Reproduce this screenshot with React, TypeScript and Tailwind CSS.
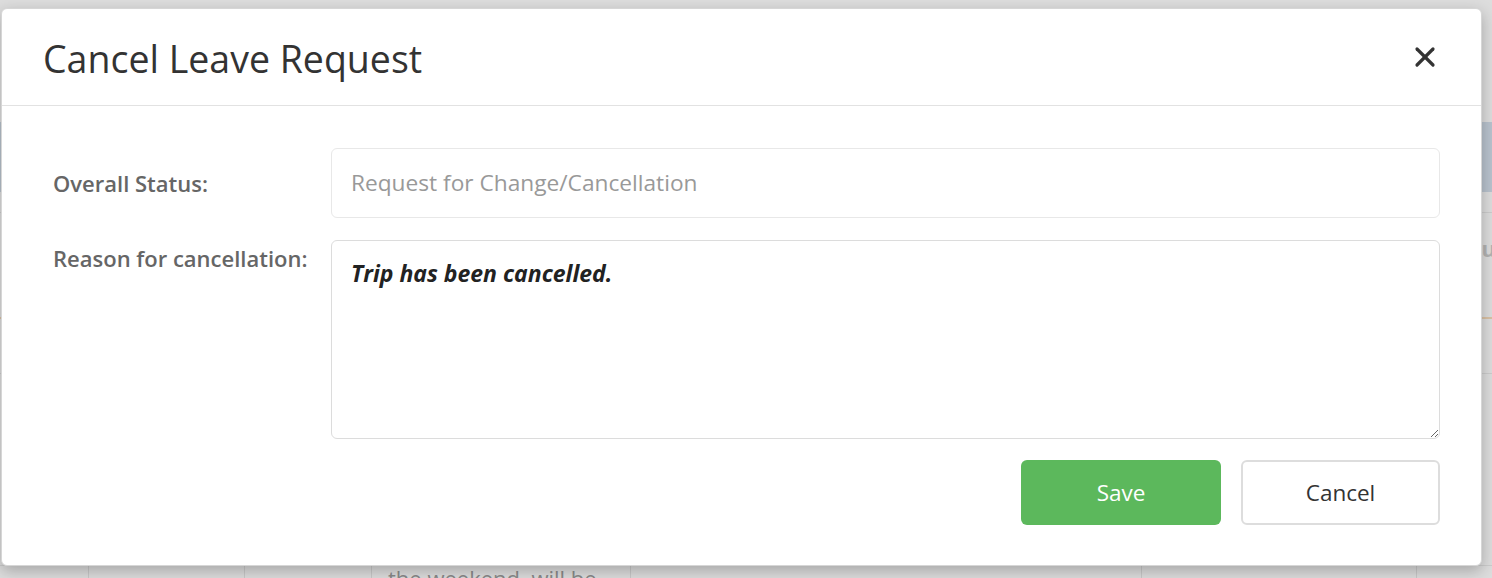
import { X } from 'lucide-react';

const font = 'font-["Open_Sans","Noto_Sans",sans-serif]';

function BackgroundPage() {
  return (
    <div className="absolute inset-0 bg-[#f7f7f7]">
      <div className="mt-[122px] h-[70px] bg-[#cfdae6]" />
      <div className="h-[21px] border-b border-[#e4e4e4]" />
      <div className="h-[106px] border-b-2 border-[#f3d9b8] pl-[1437px] pt-[20px] text-[22px] font-bold leading-[30px] text-[#c8c8c8]">
        Status
      </div>
      <div className="h-[55px] border-b border-[#e4e4e4]" />
      <div className="h-[192px] border-b border-[#e4e4e4]" />
      <div className="flex h-[30px] text-[22px] leading-[24px] text-[#9a9a9a]">
        <div className="w-[89px] border-r border-[#e0e0e0]" />
        <div className="w-[156px] border-r border-[#e0e0e0]" />
        <div className="w-[127px] border-r border-[#e0e0e0]" />
        <div className="w-[259px] border-r border-[#e0e0e0] pl-[16px]">the weekend, will be</div>
        <div className="w-[511px] border-r border-[#e0e0e0] pl-[16px] pt-[10px]">Monday to Thursday, instead of 5 ½ days</div>
        <div className="w-[275px] border-r border-[#e0e0e0]" />
      </div>
    </div>
  );
}

export default function App() {
  return (
    <div className={`relative h-[578px] w-[1492px] overflow-hidden ${font}`}>
      <BackgroundPage />
      <div className="absolute inset-0 bg-black/10" />
      <div className="absolute left-[1px] top-[8px] flex h-[558px] w-[1481px] flex-col rounded-[6px] border border-[#d6d6d6] bg-white shadow-[0_5px_15px_rgba(0,0,0,0.25)]">
        <div className="flex h-[97px] items-center justify-between border-b border-[#e2e2e2] pl-[41px] pr-[40px]">
          <h4 className="pt-[4px] text-[37.5px] font-normal leading-none text-[#333]">Cancel Leave Request</h4>
          <button className="flex h-[32px] w-[32px] items-center justify-center text-[#333]">
            <X size={34} strokeWidth={2.4} />
          </button>
        </div>
        <div className="flex flex-1 flex-col pl-[51px] pr-[41px] pt-[42px]">
          <div className="flex items-center">
            <label className="w-[278px] text-[22px] font-semibold text-[#666]">Overall Status:</label>
            <div className="flex h-[70px] flex-1 items-center rounded-[6px] border border-[#e8e8e8] px-[19px] text-[22.7px] text-[#999]">
              Request for Change/Cancellation
            </div>
          </div>
          <div className="mt-[22px] flex items-start">
            <label className="w-[278px] pt-[2px] text-[22px] font-semibold text-[#666]">Reason for cancellation:</label>
            <textarea
              readOnly
              defaultValue="Trip has been cancelled."
              className="h-[199px] flex-1 resize-y rounded-[6px] border border-[#dcdcdc] px-[19px] pt-[15px] text-[23px] font-bold italic text-[#222] outline-none"
            />
          </div>
          <div className="mt-[21px] flex justify-end gap-[20px]">
            <button className="h-[65px] w-[200px] rounded-[6px] bg-[#5cb85c] text-[22.5px] text-white">Save</button>
            <button className="h-[65px] w-[199px] rounded-[6px] border-2 border-[#dddddd] bg-white text-[22.5px] text-[#333]">
              Cancel
            </button>
          </div>
        </div>
      </div>
    </div>
  );
}
